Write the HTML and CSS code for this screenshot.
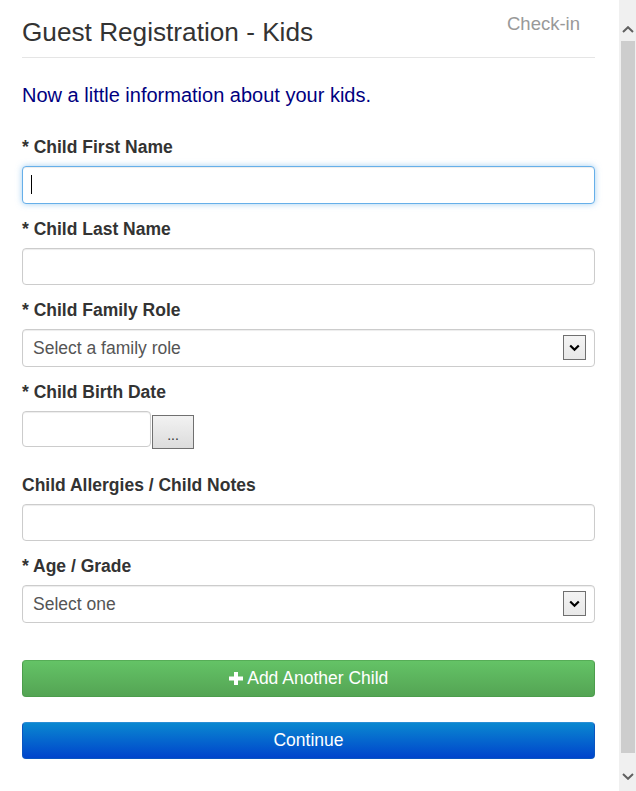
FILE: index.html
```html
<!DOCTYPE html>
<html lang="en">
<head>
<meta charset="utf-8">
<title>Guest Registration - Kids</title>
<link rel="stylesheet" href="styles.css">
</head>
<body>
<div class="page">
  <main class="content">
    <header class="page-header">
      <h1 class="title">Guest Registration - Kids</h1>
      <span class="crumb">Check-in</span>
    </header>
    <p class="intro">Now a little information about your kids.</p>
    <form class="form">
      <div class="group">
        <label class="label">* Child First Name</label>
        <div class="field-wrap">
          <input class="input focused" type="text">
          <span class="caret"></span>
        </div>
      </div>
      <div class="group">
        <label class="label">* Child Last Name</label>
        <input class="input" type="text">
      </div>
      <div class="group">
        <label class="label">* Child Family Role</label>
        <div class="select-wrap">
          <select class="input select"><option>Select a family role</option></select>
          <span class="select-btn"><svg width="11" height="8" viewBox="0 0 11 8"><polyline points="1.2,1.5 5.5,5.8 9.8,1.5" fill="none" stroke="#000" stroke-width="2.2"/></svg></span>
        </div>
      </div>
      <div class="group group-date">
        <label class="label">* Child Birth Date</label>
        <div class="date-row">
          <input class="input date" type="text">
          <button class="dots-btn" type="button">...</button>
        </div>
      </div>
      <div class="group">
        <label class="label">Child Allergies / Child Notes</label>
        <input class="input" type="text">
      </div>
      <div class="group">
        <label class="label">* Age / Grade</label>
        <div class="select-wrap">
          <select class="input select"><option>Select one</option></select>
          <span class="select-btn"><svg width="11" height="8" viewBox="0 0 11 8"><polyline points="1.2,1.5 5.5,5.8 9.8,1.5" fill="none" stroke="#000" stroke-width="2.2"/></svg></span>
        </div>
      </div>
      <button class="btn btn-add" type="button"><svg class="plus" width="14" height="13" viewBox="0 0 14 13"><rect x="5" y="0" width="4" height="13" fill="#fff"/><rect x="0" y="4.5" width="14" height="4" fill="#fff"/></svg><span>Add Another Child</span></button>
      <button class="btn btn-continue" type="button">Continue</button>
    </form>
  </main>
  <aside class="scrollbar">
    <div class="sb-top"><svg width="12" height="7" viewBox="0 0 12 7"><polyline points="1,6 6,1.2 11,6" fill="none" stroke="#606060" stroke-width="2"/></svg></div>
    <div class="sb-thumb"></div>
    <div class="sb-bottom"><svg width="12" height="7" viewBox="0 0 12 7"><polyline points="1,1 6,5.8 11,1" fill="none" stroke="#606060" stroke-width="2"/></svg></div>
  </aside>
</div>
</body>
</html>
```

FILE: styles.css
```css
html, body {
  margin: 0;
  padding: 0;
  height: 100%;
}

body {
  font-family: "Liberation Sans", Arial, Helvetica, sans-serif;
  color: #333;
  background: #fff;
  overflow: hidden;
}

.page {
  display: flex;
  height: 791px;
}

.content {
  flex: 1;
  min-width: 0;
  padding: 0 24px 0 22px;
}

.page-header {
  display: flex;
  justify-content: space-between;
  align-items: flex-start;
  padding-bottom: 10px;
  border-bottom: 1px solid #e5e5e5;
}

.title {
  margin: 17px 0 0;
  font-size: 26.2px;
  line-height: 30px;
  font-weight: normal;
  color: #333;
}

.crumb {
  margin: 13px 15px 0 0;
  font-size: 18.5px;
  line-height: 22px;
  color: #999;
}

.intro {
  margin: 23px 0 0;
  font-size: 20px;
  line-height: 28px;
  color: #000080;
}

.form {
  margin-top: 27px;
}

.group {
  margin-bottom: 14px;
}

.group-date {
  margin-bottom: 24.5px;
}

.label {
  display: block;
  font-weight: bold;
  font-size: 17.5px;
  line-height: 22px;
  margin-bottom: 8px;
  color: #333;
}

.input {
  display: block;
  box-sizing: border-box;
  width: 100%;
  height: 37.5px;
  margin: 0;
  padding: 0 11px 0 10px;
  border: 1px solid #ccc;
  border-radius: 4px;
  box-shadow: inset 0 1px 1px rgba(0, 0, 0, 0.075);
  background: #fff;
  font-family: "Liberation Sans", Arial, sans-serif;
  font-size: 17.5px;
  color: #555;
  outline: none;
}

.focused {
  border-color: #66afe9;
  box-shadow: inset 0 1px 1px rgba(0, 0, 0, 0.075), 0 0 6px rgba(102, 175, 233, 0.6);
}

.field-wrap,
.select-wrap {
  position: relative;
}

.caret {
  position: absolute;
  left: 9px;
  top: 9px;
  width: 1px;
  height: 19px;
  background: #000;
}

.select {
  -webkit-appearance: none;
  appearance: none;
}

.select-btn {
  position: absolute;
  right: 9px;
  top: 6px;
  width: 23px;
  height: 25px;
  box-sizing: border-box;
  border: 1px solid #707070;
  background: linear-gradient(#f4f4f4, #e8e8e8);
  display: flex;
  align-items: center;
  justify-content: center;
  pointer-events: none;
}

.date-row {
  display: flex;
  align-items: flex-start;
}

.input.date {
  width: 129px;
  height: 36.5px;
}

.dots-btn {
  box-sizing: border-box;
  width: 42px;
  height: 34.5px;
  margin: 4px 0 0 1px;
  padding: 6px 0 0;
  border: 1px solid #707070;
  border-radius: 0;
  background: linear-gradient(#f2f2f2, #dcdcdc);
  font-family: "Liberation Sans", Arial, sans-serif;
  font-size: 14px;
  color: #333;
}

.btn {
  display: flex;
  align-items: center;
  justify-content: center;
  box-sizing: border-box;
  width: 100%;
  height: 37px;
  margin: 0;
  padding: 0;
  border-radius: 4px;
  font-family: "Liberation Sans", Arial, sans-serif;
  font-size: 17.5px;
  color: #fff;
}

.btn-add {
  margin-top: 37px;
  background: linear-gradient(#64c366, #54a454);
  border: 1px solid #4c9d4c;
  border-top-color: #56ad57;
}

.plus {
  margin-right: 4.5px;
}

.btn-continue {
  margin-top: 25px;
  background: linear-gradient(#0a88d0, #0044cc);
  border: 1px solid #0a55c0;
  border-top-color: #2a8ed6;
}

.scrollbar {
  flex: none;
  width: 17px;
  background: #f0f0f0;
  display: flex;
  flex-direction: column;
}

.sb-top {
  height: 41px;
  box-sizing: border-box;
  display: flex;
  justify-content: center;
  align-items: flex-end;
  padding-bottom: 8px;
}

.sb-thumb {
  height: 712px;
  margin: 0 1px 0 2px;
  background: #cdcdcd;
}

.sb-bottom {
  flex: 1;
  display: flex;
  justify-content: center;
  align-items: flex-start;
  padding-top: 19.5px;
}
```
